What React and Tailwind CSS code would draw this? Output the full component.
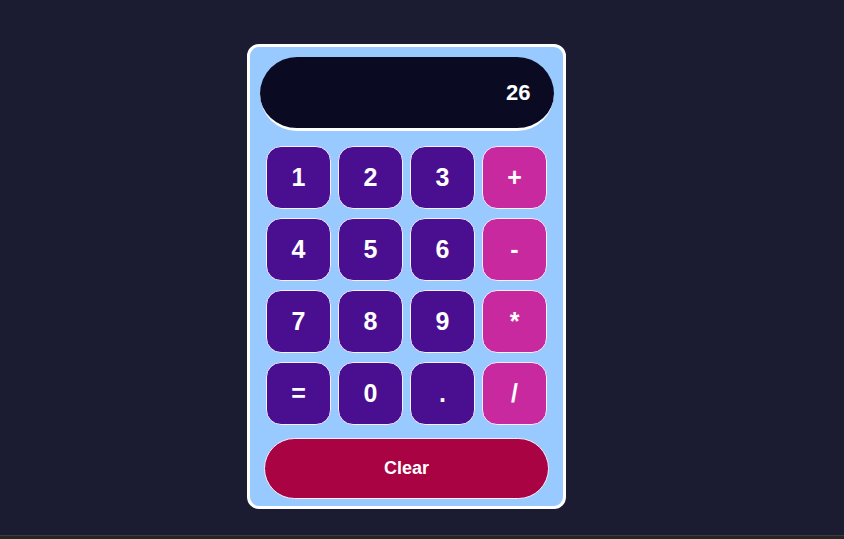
import React from "react";

const keys = [
  ["1", "n"], ["2", "n"], ["3", "n"], ["+", "o"],
  ["4", "n"], ["5", "n"], ["6", "n"], ["-", "o"],
  ["7", "n"], ["8", "n"], ["9", "n"], ["*", "o"],
  ["=", "n"], ["0", "n"], [".", "n"], ["/", "o"],
];

export default function App() {
  return (
    <div
      className="flex h-[539px] w-full flex-col bg-[#1b1c31]"
      style={{ fontFamily: '"Liberation Sans", Arial, sans-serif' }}
    >
      <div className="flex flex-1 items-start pl-[247px] pt-[44px]">
        <div className="flex w-[319px] flex-col items-center rounded-[12px] border-[3px] border-white bg-[#99caff] pb-[7px] pt-[10px]">
          <div className="flex h-[74px] w-[294px] items-center justify-end rounded-full border-b-[3px] border-white bg-[#0a0a23] pr-[23px] text-[22px] font-bold text-white">
            26
          </div>
          <div className="mt-[15px] grid grid-cols-4 gap-x-[7px] gap-y-[9px]">
            {keys.map(([k, t]) => (
              <button
                key={k}
                className={
                  "flex h-[63px] w-[65px] items-center justify-center rounded-[15px] border border-[#f4f0ff] text-[25px] font-bold text-white " +
                  (t === "o" ? "bg-[#c8299f]" : "bg-[#4a0e91]")
                }
              >
                {k}
              </button>
            ))}
          </div>
          <button className="mt-[13px] flex h-[61px] w-[285px] items-center justify-center rounded-full border border-[#f4f0ff] bg-[#a90343] text-[18px] font-bold text-white">
            Clear
          </button>
        </div>
      </div>
      <div className="h-[4px] border-t border-[#3b3b3b] bg-[#262626]" />
    </div>
  );
}
